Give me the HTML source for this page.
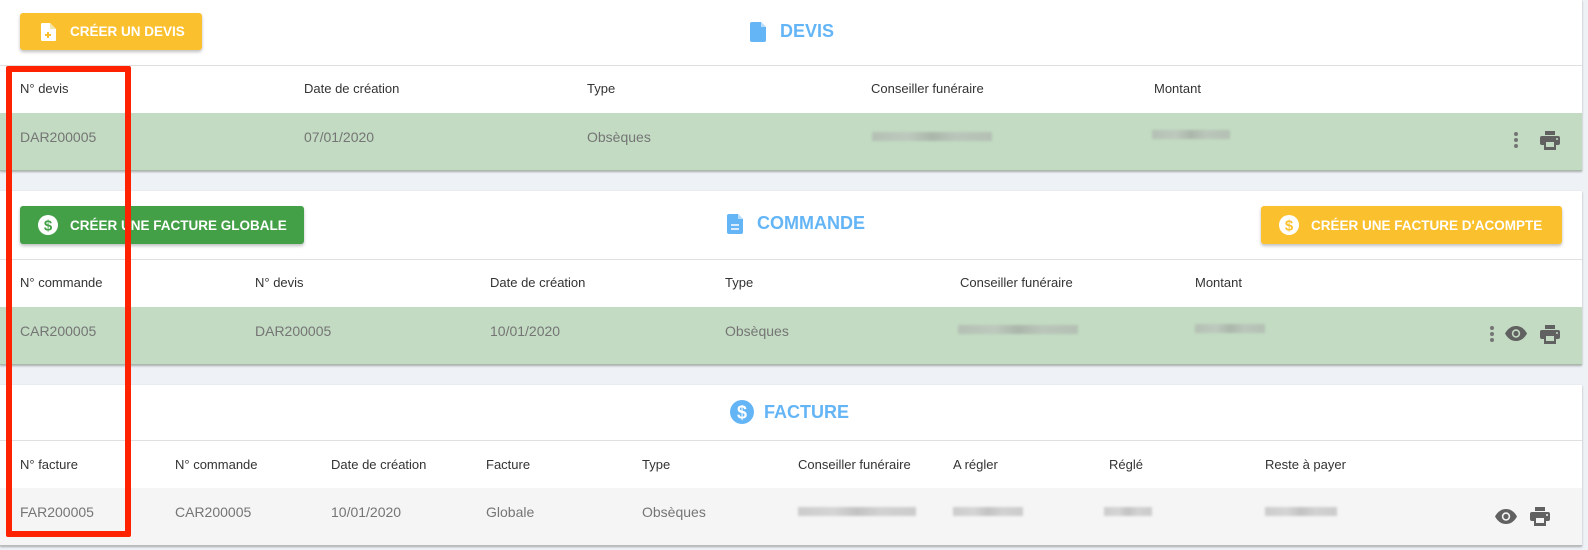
<!DOCTYPE html>
<html><head><meta charset="utf-8"><style>
*{box-sizing:border-box;margin:0;padding:0}
body{width:1588px;height:550px;background:#eef2f6;font-family:"Liberation Sans",sans-serif;position:relative;overflow:hidden}
.card{position:absolute;left:0;width:1582px;background:#fff;box-shadow:0 1px 2px rgba(0,0,0,.3)}
.a{position:absolute;white-space:nowrap}
.h{font-size:13px;color:#333}
.v{font-size:14px;color:#757575}
.line{position:absolute;left:0;right:0;height:1px;background:#e0e0e0}
.row{position:absolute;left:0;right:0}
.btn{position:absolute;border-radius:3px;color:#fff;font-weight:bold;font-size:13.5px;box-shadow:0 2px 3px rgba(0,0,0,.25);display:flex;align-items:center}
.title{position:absolute;color:#64b5f6;font-weight:bold;font-size:18px;display:flex;align-items:center}
.blur{position:absolute;height:9px;background:linear-gradient(90deg,#aaa,#bbb 30%,#999 50%,#b5b5b5 70%,#aaa);opacity:.55;filter:blur(1.2px)}
</style></head><body>

<div class="card" style="top:0;height:171px">
  <div class="btn" style="left:20px;top:13px;width:182px;height:37px;background:#fbc02d">
    <svg style="position:absolute;left:20px;top:10px" width="16" height="18" viewBox="0 0 16 18"><path d="M2 0h8l6 6v11a1 1 0 0 1-1 1H2a1 1 0 0 1-1-1V1a1 1 0 0 1 1-1z" fill="#fff"/><path d="M10 0v6h6" fill="#f5e6b0"/><path d="M8 9v6M5 12h6" stroke="#fbc02d" stroke-width="2"/></svg>
    <span style="position:absolute;left:50px">CRÉER UN DEVIS</span></div>
  <div class="title" style="left:750px;top:21px">
    <svg width="16" height="20" viewBox="0 0 16 20"><path d="M2 0h9l5 5v13a2 2 0 0 1-2 2H2a2 2 0 0 1-2-2V2a2 2 0 0 1 2-2z" fill="#64b5f6"/><path d="M11 0v5h5" fill="#bbdefb"/></svg>
    <span style="margin-left:14px">DEVIS</span></div>
  <div class="line" style="top:65px"></div>
  <div class="a h" style="left:20px;top:81px">N° devis</div>
  <div class="a h" style="left:304px;top:81px">Date de création</div>
  <div class="a h" style="left:587px;top:81px">Type</div>
  <div class="a h" style="left:871px;top:81px">Conseiller funéraire</div>
  <div class="a h" style="left:1154px;top:81px">Montant</div>
  <div class="row" style="top:113px;height:58px;background:#c2dbc2;border-bottom:1px solid #a9b9a9">
    <div class="a v" style="left:20px;top:16px">DAR200005</div>
    <div class="a v" style="left:304px;top:16px">07/01/2020</div>
    <div class="a v" style="left:587px;top:16px">Obsèques</div>
    <div class="blur" style="left:872px;top:19px;width:120px"></div>
    <div class="blur" style="left:1152px;top:17px;width:78px"></div>
    <svg class="a" style="left:1513px;top:17px" width="6" height="20"><circle cx="3" cy="4" r="2" fill="#757575"/><circle cx="3" cy="10" r="2" fill="#757575"/><circle cx="3" cy="16" r="2" fill="#757575"/></svg>
    <svg class="a" style="left:1540px;top:18px" width="20" height="19" viewBox="0 0 20 19"><rect x="5" y="0" width="10" height="4" fill="#616161"/><rect x="0" y="5" width="20" height="9" rx="2" fill="#616161"/><rect x="4" y="11" width="12" height="8" fill="#616161"/><rect x="6" y="11" width="8" height="5" fill="#c2dbc2"/><circle cx="17" cy="8" r="1" fill="#c2dbc2"/></svg>
  </div>
</div>

<div class="card" style="top:191px;height:174px">
  <div class="btn" style="left:20px;top:15px;width:284px;height:38px;background:#43a047">
    <svg style="position:absolute;left:18px;top:9px" width="20" height="20" viewBox="0 0 20 20"><circle cx="10" cy="10" r="10" fill="#fff"/><text x="10" y="15.5" text-anchor="middle" font-family="Liberation Sans" font-weight="bold" font-size="15" fill="#43a047">$</text></svg>
    <span style="position:absolute;left:50px">CRÉER UNE FACTURE GLOBALE</span></div>
  <div class="title" style="left:727px;top:22px">
    <svg width="16" height="20" viewBox="0 0 16 20"><path d="M2 0h9l5 5v13a2 2 0 0 1-2 2H2a2 2 0 0 1-2-2V2a2 2 0 0 1 2-2z" fill="#64b5f6"/><path d="M11 0v5h5" fill="#bbdefb"/><path d="M4 11h8M4 15h8" stroke="#fff" stroke-width="1.6"/></svg>
    <span style="margin-left:14px">COMMANDE</span></div>
  <div class="btn" style="left:1261px;top:15px;width:301px;height:38px;background:#fbc02d">
    <svg style="position:absolute;left:18px;top:9px" width="20" height="20" viewBox="0 0 20 20"><circle cx="10" cy="10" r="10" fill="#fff"/><text x="10" y="15.5" text-anchor="middle" font-family="Liberation Sans" font-weight="bold" font-size="15" fill="#fbc02d">$</text></svg>
    <span style="position:absolute;left:50px">CRÉER UNE FACTURE D'ACOMPTE</span></div>
  <div class="line" style="top:68px"></div>
  <div class="a h" style="left:20px;top:84px">N° commande</div>
  <div class="a h" style="left:255px;top:84px">N° devis</div>
  <div class="a h" style="left:490px;top:84px">Date de création</div>
  <div class="a h" style="left:725px;top:84px">Type</div>
  <div class="a h" style="left:960px;top:84px">Conseiller funéraire</div>
  <div class="a h" style="left:1195px;top:84px">Montant</div>
  <div class="row" style="top:116px;height:58px;background:#c2dbc2;border-bottom:1px solid #a9b9a9">
    <div class="a v" style="left:20px;top:16px">CAR200005</div>
    <div class="a v" style="left:255px;top:16px">DAR200005</div>
    <div class="a v" style="left:490px;top:16px">10/01/2020</div>
    <div class="a v" style="left:725px;top:16px">Obsèques</div>
    <div class="blur" style="left:958px;top:18px;width:120px"></div>
    <div class="blur" style="left:1195px;top:17px;width:70px"></div>
    <svg class="a" style="left:1489px;top:17px" width="6" height="20"><circle cx="3" cy="4" r="2" fill="#757575"/><circle cx="3" cy="10" r="2" fill="#757575"/><circle cx="3" cy="16" r="2" fill="#757575"/></svg>
    <svg class="a" style="left:1505px;top:19px" width="22" height="15" viewBox="0 0 22 15"><path d="M0 7.5C3 2 7 0 11 0s8 2 11 7.5C19 13 15 15 11 15S3 13 0 7.5z" fill="#616161"/><circle cx="11" cy="7.5" r="4.2" fill="#c2dbc2"/><circle cx="11" cy="7.5" r="2.6" fill="#616161"/></svg>
    <svg class="a" style="left:1540px;top:18px" width="20" height="19" viewBox="0 0 20 19"><rect x="5" y="0" width="10" height="4" fill="#616161"/><rect x="0" y="5" width="20" height="9" rx="2" fill="#616161"/><rect x="4" y="11" width="12" height="8" fill="#616161"/><rect x="6" y="11" width="8" height="5" fill="#c2dbc2"/><circle cx="17" cy="8" r="1" fill="#c2dbc2"/></svg>
  </div>
</div>

<div class="card" style="top:385px;height:161px">
  <div class="title" style="left:730px;top:15px">
    <svg width="24" height="24" viewBox="0 0 24 24"><circle cx="12" cy="12" r="12" fill="#64b5f6"/><text x="12" y="18.5" text-anchor="middle" font-family="Liberation Sans" font-weight="bold" font-size="18" fill="#fff">$</text></svg>
    <span style="margin-left:10px">FACTURE</span></div>
  <div class="line" style="top:55px"></div>
  <div class="a h" style="left:20px;top:72px">N° facture</div>
  <div class="a h" style="left:175px;top:72px">N° commande</div>
  <div class="a h" style="left:331px;top:72px">Date de création</div>
  <div class="a h" style="left:486px;top:72px">Facture</div>
  <div class="a h" style="left:642px;top:72px">Type</div>
  <div class="a h" style="left:798px;top:72px">Conseiller funéraire</div>
  <div class="a h" style="left:953px;top:72px">A régler</div>
  <div class="a h" style="left:1109px;top:72px">Réglé</div>
  <div class="a h" style="left:1265px;top:72px">Reste à payer</div>
  <div class="row" style="top:103px;height:58px;background:#f5f5f5;border-bottom:1px solid #bbb">
    <div class="a v" style="left:20px;top:16px">FAR200005</div>
    <div class="a v" style="left:175px;top:16px">CAR200005</div>
    <div class="a v" style="left:331px;top:16px">10/01/2020</div>
    <div class="a v" style="left:486px;top:16px">Globale</div>
    <div class="a v" style="left:642px;top:16px">Obsèques</div>
    <div class="blur" style="left:798px;top:19px;width:118px"></div>
    <div class="blur" style="left:953px;top:19px;width:70px"></div>
    <div class="blur" style="left:1104px;top:19px;width:48px"></div>
    <div class="blur" style="left:1265px;top:19px;width:72px"></div>
    <svg class="a" style="left:1495px;top:21px" width="22" height="15" viewBox="0 0 22 15"><path d="M0 7.5C3 2 7 0 11 0s8 2 11 7.5C19 13 15 15 11 15S3 13 0 7.5z" fill="#616161"/><circle cx="11" cy="7.5" r="4.2" fill="#f5f5f5"/><circle cx="11" cy="7.5" r="2.6" fill="#616161"/></svg>
    <svg class="a" style="left:1530px;top:19px" width="20" height="19" viewBox="0 0 20 19"><rect x="5" y="0" width="10" height="4" fill="#616161"/><rect x="0" y="5" width="20" height="9" rx="2" fill="#616161"/><rect x="4" y="11" width="12" height="8" fill="#616161"/><rect x="6" y="11" width="8" height="5" fill="#f5f5f5"/><circle cx="17" cy="8" r="1" fill="#f5f5f5"/></svg>
  </div>
</div>

<div style="position:absolute;left:6px;top:66px;width:125px;height:471px;border:6px solid #ff2200;border-radius:2px"></div>
</body></html>
